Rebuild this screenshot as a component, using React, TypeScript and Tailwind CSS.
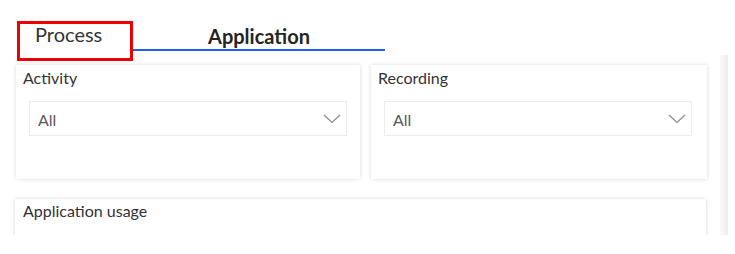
import React from "react";

function Chevron() {
  return (
    <svg width="18" height="10" viewBox="0 0 18 10" fill="none">
      <path d="M1 1 L9 8.5 L17 1" stroke="#8a8a8a" strokeWidth="1.2" />
    </svg>
  );
}

function Slicer({ label, w, ddw }: { label: string; w: string; ddw: string }) {
  return (
    <div className={`${w} h-[114px] bg-white shadow-[0_0_4px_rgba(0,0,0,0.16)] pl-[7px] pt-[2px] flex flex-col`}>
      <div className="text-[16px] leading-[22px] text-[#333]">{label}</div>
      <div className={`${ddw} ml-[6px] mt-[12px] h-[35px] border border-[#ececec] flex items-center justify-between pl-[8px] pr-[5px]`}>
        <span className="text-[16px] leading-[22px] pt-[3px] text-[#5a5a5a]">All</span>
        <Chevron />
      </div>
    </div>
  );
}

export default function App() {
  return (
    <div className="w-[735px] h-[254px] bg-white overflow-hidden relative" style={{ fontFamily: 'Lato, "Noto Sans", sans-serif' }}>
      <div className="h-[235px] overflow-hidden relative">
        <div className="flex items-end pt-[21px] pl-[17px]">
          <div className="w-[116px] h-[40px] border-[3px] border-[#ee0000] pl-[15px] text-[20px] leading-[20px] text-[#333]">Process</div>
          <div className="w-[252px] h-[30px] mb-[10px] border-b-2 border-[#1f5ef0] text-center text-[20px] leading-[30px] font-bold text-[#252423]">Application</div>
        </div>
        <div className="flex gap-[11px] pl-[16px] mt-[4px]">
          <Slicer label="Activity" w="w-[344px]" ddw="w-[318px]" />
          <Slicer label="Recording" w="w-[336px]" ddw="w-[308px]" />
        </div>
        <div className="ml-[15px] mt-[20px] w-[691px] h-[60px] bg-white shadow-[0_0_4px_rgba(0,0,0,0.16)] pl-[8px] pt-[2px] text-[16px] leading-[20px] text-[#333]">
          Application usage
        </div>
        <div className="absolute left-[720px] top-[55px] w-[8px] h-[180px] bg-gradient-to-r from-[#fafafa] to-[#ededed]" />
      </div>
    </div>
  );
}
